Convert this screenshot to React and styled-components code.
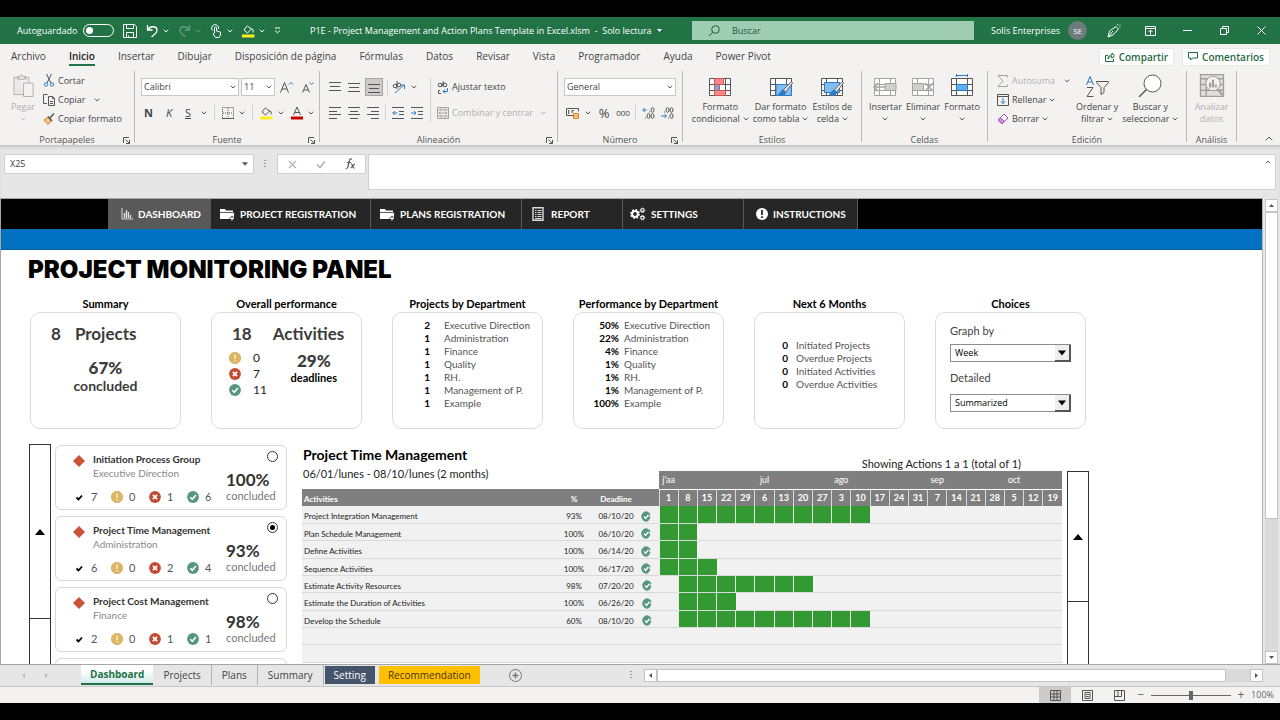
import React, { useState } from 'react';
import styled, { createGlobalStyle, css } from 'styled-components';

const GlobalStyle = createGlobalStyle`
  * {
    box-sizing: border-box;
  }

  body {
    margin: 0;
    background-color: #000;
  }

  button,
  input,
  select {
    font: inherit;
    color: inherit;
    margin: 0;
    padding: 0;
    border: 0;
    background: none;
    border-radius: 0;
  }

  button {
    cursor: pointer;
  }

  svg {
    display: block;
    flex: none;
  }
`;

const Window = styled.div`
  display: flex;
  flex-direction: column;
  height: 100vh;
  padding: 17px 0;
  background-color: #000;
  color: #444;
  font-family: 'Open Sans', 'Noto Sans', sans-serif;
  font-size: 9px;
  line-height: 12px;
`;

/* ---------- title bar ---------- */

const TitleBar = styled.header`
  display: grid;
  grid-template-columns: 310px 1fr 282px 306px;
  align-items: center;
  height: 27px;
  flex: none;
  background-color: #217346;
  color: #fff;
`;

const QuickAccess = styled.div`
  display: flex;
  align-items: center;
  padding-left: 17px;
`;

const AutoSave = styled.label`
  display: flex;
  align-items: center;
  gap: 6px;
  margin-right: 9px;
`;

const Toggle = styled.input.attrs({ type: 'checkbox' })`
  appearance: none;
  display: flex;
  align-items: center;
  width: 31px;
  height: 13px;
  border: 1px solid #fff;
  border-radius: 7px;
  padding-left: 2px;

  &::before {
    content: '';
    width: 7px;
    height: 7px;
    border-radius: 50%;
    background-color: #fff;
  }
`;

const QuickButton = styled.button`
  display: flex;
  align-items: center;
  gap: 4px;
  margin-right: 9px;
  opacity: ${(props) => (props.$faded ? 0.3 : 1)};
`;

const FileName = styled.div`
  display: flex;
  align-items: center;
  gap: 5px;
  white-space: pre;
`;

const SearchBox = styled.label`
  display: flex;
  align-items: center;
  gap: 12px;
  height: 19px;
  padding-left: 16px;
  background-color: #9fcdb3;
  color: #1e5c3b;

  input {
    flex: 1;
    outline: none;
  }

  input::placeholder {
    color: #1e5c3b;
  }
`;

const Account = styled.div`
  display: flex;
  align-items: center;
`;

const Avatar = styled.span`
  display: grid;
  place-items: center;
  width: 19px;
  height: 19px;
  border-radius: 50%;
  background-color: #6d7b7c;
  font-size: 8px;
`;

const UserName = styled.div`
  display: flex;
  align-items: center;
  gap: 8px;
  margin-right: auto;
  padding-left: 17px;
`;

const WindowButton = styled.button`
  display: grid;
  place-items: center;
  width: 37px;
  height: 27px;
`;

/* ---------- ribbon ---------- */

const TabRow = styled.nav`
  display: flex;
  align-items: center;
  justify-content: space-between;
  height: 25px;
  flex: none;
  padding: 0 10px 0 11px;
  background-color: #f3f2f1;
  font-size: 10px;
`;

const TabList = styled.div`
  display: flex;
  gap: 23px;
`;

const RibbonTab = styled.button`
  height: 19px;
  border-bottom: 2px solid transparent;
  white-space: nowrap;
  ${(props) =>
    props.$active &&
    css`
      border-color: #217346;
      color: #222;
      font-weight: 600;
    `}
`;

const TabActions = styled.div`
  display: flex;
  gap: 8px;
`;

const ShareButton = styled.button`
  display: flex;
  align-items: center;
  gap: 4px;
  height: 18px;
  padding: 0 5px;
  border: 1px solid #e8e7e6;
  border-radius: 2px;
  background-color: #fff;
  color: #1f6b41;
  font-weight: 600;
`;

const Ribbon = styled.section`
  display: flex;
  height: 76px;
  flex: none;
  background-color: #f3f2f1;
`;

const Group = styled.div`
  display: flex;
  flex-direction: column;
  flex: none;
  width: ${(props) => props.$width}px;
  margin: 2px 0 3px;
  border-right: 1px solid #bdbbb9;
`;

const GroupBody = styled.div`
  display: flex;
  flex: 1;
  gap: ${(props) => props.$gap || 0}px;
  padding-left: ${(props) => props.$left || 0}px;
  justify-content: ${(props) => (props.$center ? 'center' : 'flex-start')};
`;

const GroupLabel = styled.div`
  display: grid;
  grid-template-columns: ${(props) => (props.$plain ? '1fr' : '16px 1fr 16px')};
  align-items: center;
  height: 8px;
  text-align: center;
  color: #555;

  button {
    justify-self: center;
  }
`;

const ButtonColumn = styled.div`
  display: flex;
  flex-direction: column;
  justify-content: space-between;
  height: 55px;
  padding-top: 2px;
`;

const SmallButton = styled.button`
  display: flex;
  align-items: center;
  gap: 3px;
  height: 15px;
  white-space: nowrap;
  color: ${(props) => (props.disabled ? '#b1afad' : '#444')};
`;

const LargeButton = styled.button`
  display: flex;
  flex-direction: column;
  align-items: center;
  min-width: 30px;
  padding-top: 3px;
  white-space: nowrap;
  color: ${(props) => (props.disabled ? '#b1afad' : '#444')};

  svg:first-child {
    margin-bottom: 4px;
  }
`;

const ButtonLine = styled.span`
  display: flex;
  align-items: center;
  gap: 3px;
  height: 12px;

  svg:first-child {
    margin-bottom: 0;
  }
`;

const Stack = styled.div`
  display: flex;
  flex-direction: column;
  gap: 8px;
  padding-top: 7px;
`;

const ToolRow = styled.div`
  display: flex;
  align-items: center;
  gap: ${(props) => props.$gap}px;
  height: 18px;
`;

const ToolButton = styled.button`
  display: flex;
  align-items: center;
  justify-content: center;
  gap: 5px;
  min-width: ${(props) => props.$width || 12}px;
  height: 18px;
  color: ${(props) => (props.disabled ? '#b1afad' : '#444')};
  font-size: ${(props) => props.$size || 9}px;
  font-weight: ${(props) => (props.$bold ? 700 : 400)};
  font-style: ${(props) => (props.$italic ? 'italic' : 'normal')};
  text-decoration: ${(props) => (props.$underline ? 'underline' : 'none')};
  white-space: nowrap;
  ${(props) =>
    props.$pressed &&
    css`
      border: 1px solid #a6a4a2;
      background-color: #cdcbc9;
    `}
`;

const Separator = styled.span`
  width: 1px;
  height: ${(props) => props.$height || 16}px;
  background-color: #d4d2d0;
`;

const Picker = styled.span`
  position: relative;
  display: block;
  width: ${(props) => props.$width}px;

  svg {
    position: absolute;
    top: 50%;
    right: 3px;
    margin-top: -2px;
    pointer-events: none;
  }
`;

const PickerSelect = styled.select`
  appearance: none;
  display: block;
  width: 100%;
  height: 18px;
  padding-left: 2px;
  border: 1px solid #c8c6c4;
  background-color: #fff;
`;

const RibbonEnd = styled.div`
  display: flex;
  flex: 1;
  align-items: flex-end;
  justify-content: flex-end;
  padding: 0 7px 4px 0;
`;

/* ---------- formula bar ---------- */

const FormulaBar = styled.section`
  display: flex;
  align-items: flex-start;
  height: 53px;
  flex: none;
  padding: 9px 4px 0;
  background-color: #e6e6e6;
  box-shadow: inset 0 3px 3px -1px #c4c4c4;
`;

const NameBox = styled.label`
  display: flex;
  align-items: center;
  width: 250px;
  height: 20px;
  padding: 0 5px;
  border: 1px solid #d0d0d0;
  background-color: #fff;

  input {
    flex: 1;
    min-width: 0;
    outline: none;
  }
`;

const Dots = styled.span`
  width: 2px;
  height: 9px;
  margin: ${(props) => props.$margin};
  background-image: linear-gradient(#9a9a9a 1px, transparent 1px);
  background-size: 2px 3px;
`;

const FormulaButtons = styled.div`
  display: flex;
  align-items: center;
  justify-content: space-around;
  width: 89px;
  height: 20px;
  margin-right: 2px;
  border: 1px solid #d0d0d0;
  background-color: #fff;
`;

const FormulaInput = styled.div`
  display: flex;
  justify-content: flex-end;
  flex: 1;
  height: 36px;
  padding: 5px 4px 0;
  border: 1px solid #d0d0d0;
  background-color: #fff;

  input {
    flex: 1;
    height: 14px;
    outline: none;
  }
`;

/* ---------- sheet ---------- */

const SheetArea = styled.div`
  display: flex;
  flex: 1;
  min-height: 0;
`;

const Sheet = styled.main`
  flex: 1;
  min-width: 0;
  overflow: hidden;
  border-left: 1px solid #a6a6a6;
  border-top: 1px solid #a6a6a6;
  background-color: #fff;
  color: #222;
  font-family: Lato, 'Open Sans', sans-serif;
  font-size: 10px;
`;

const NavBar = styled.nav`
  display: flex;
  height: 30px;
  padding-left: 107px;
  background-color: #000;
`;

const NavItem = styled.a`
  display: flex;
  align-items: center;
  gap: ${(props) => props.$gap}px;
  width: ${(props) => props.$width}px;
  padding-left: ${(props) => props.$left}px;
  border-right: 1px solid #595959;
  background-color: ${(props) => (props.$active ? '#595959' : '#262626')};
  color: #fff;
  font-weight: 700;
  text-decoration: none;
  white-space: nowrap;
`;

const BlueBand = styled.div`
  height: 21px;
  background-color: #0070c0;
  border-bottom: 1px solid #0a5c9c;
`;

const Panel = styled.div`
  padding: 7px 0 0 27px;
`;

const PanelTitle = styled.h1`
  margin: 0;
  color: #000;
  font-family: Inter, 'Liberation Sans', sans-serif;
  font-size: 24px;
  font-weight: 900;
  line-height: 25px;
`;

const Cards = styled.div`
  display: grid;
  grid-template-columns: repeat(6, 151px);
  gap: 30px;
  margin-top: 14px;
  padding-left: 2px;
`;

const CardTitle = styled.h2`
  margin: 0;
  color: #000;
  font-size: 11px;
  font-weight: 700;
  line-height: 16px;
  text-align: center;
  white-space: nowrap;
`;

const CardBox = styled.div`
  height: 117px;
  border: 1px solid #dcdcdc;
  border-radius: 10px;
`;

const Headline = styled.div`
  display: flex;
  gap: ${(props) => props.$gap}px;
  padding: 11px 0 0 20px;
  color: #3b3b3b;
  font-size: 17px;
  font-weight: 700;
  line-height: 20px;
`;

const Centered = styled.div`
  padding-top: 15px;
  color: #3b3b3b;
  font-size: 14px;
  font-weight: 700;
  line-height: 17px;
  text-align: center;

  strong {
    display: block;
    font-size: 17px;
    line-height: 18px;
  }
`;

const Performance = styled.div`
  display: flex;
  justify-content: space-between;
  padding: 6px 24px 0 17px;
`;

const CountList = styled.div`
  display: flex;
  flex-direction: column;
  color: #222;
  font-size: 12px;
  line-height: 16px;

  span {
    display: flex;
    align-items: center;
    gap: 12px;
  }
`;

const Deadlines = styled.div`
  padding-top: 2px;
  color: #000;
  font-size: 11px;
  font-weight: 700;
  line-height: 15px;
  text-align: center;

  strong {
    display: block;
    color: #3b3b3b;
    font-size: 17px;
    line-height: 18px;
  }
`;

const FigureList = styled.dl`
  display: grid;
  grid-template-columns: ${(props) => props.$num}px 1fr;
  column-gap: ${(props) => props.$gap}px;
  margin: 0;
  padding-top: ${(props) => props.$top}px;
  line-height: 13px;
  white-space: nowrap;

  dt {
    color: #000;
    font-weight: 700;
    text-align: right;
  }

  dd {
    margin: 0;
    color: #555;
  }
`;

const FormSelect = styled.span`
  position: relative;
  display: block;
  width: 121px;
  margin-top: 5px;

  select {
    appearance: none;
    display: block;
    width: 100%;
    height: 18px;
    padding-left: 4px;
    border: 1px solid #8c8c8c;
    background-color: #fff;
    color: #000;
    font-family: 'Open Sans', sans-serif;
    font-size: 9px;
  }
`;

const ChoiceLabel = styled.label`
  display: block;
  padding: 10px 14px 0;
  color: #444;
  font-size: 11px;
  line-height: 16px;

  & + & {
    padding-top: 8px;
  }

  & + & ${FormSelect} {
    margin-top: 8px;
  }
`;

const DropArrow = styled.span`
  position: absolute;
  top: 1px;
  right: 0;
  display: grid;
  place-items: center;
  width: 16px;
  height: 17px;
  border-right: 2px solid #555;
  border-bottom: 2px solid #555;
  background-color: #eee;
  pointer-events: none;
`;

const Lower = styled.div`
  display: flex;
  align-items: flex-start;
  margin-top: 15px;
`;

const Spinner = styled.div`
  display: flex;
  flex-direction: column;
  flex: none;
  width: 22px;
  margin: ${(props) => props.$margin};
  border: 1px solid #333;

  button {
    display: grid;
    place-items: center;
    height: ${(props) => props.$height}px;
  }

  button + button {
    height: 200px;
    border-top: 1px solid #333;
  }
`;

const ProjectList = styled.div`
  display: flex;
  flex-direction: column;
  gap: 6px;
  flex: none;
  width: 232px;
  padding-top: 1px;
`;

const ProjectCard = styled.label`
  display: flex;
  justify-content: space-between;
  height: 65px;
  border: 1px solid #d9d9d9;
  border-radius: 6px;
`;

const ProjectInfo = styled.div`
  display: flex;
  flex-direction: column;
  justify-content: space-between;
  padding: 6px 0 6px 17px;
`;

const ProjectHead = styled.div`
  display: flex;
  gap: 8px;
  color: #888;
  line-height: 14px;

  svg {
    margin-top: 3px;
  }

  strong {
    display: block;
    color: #333;
  }
`;

const Stats = styled.div`
  display: grid;
  grid-template-columns: repeat(4, 38px);
  color: #555;
  font-size: 11px;
`;

const Stat = styled.span`
  display: flex;
  align-items: center;
  gap: 6px;
`;

const ProjectResult = styled.div`
  display: flex;
  flex-direction: column;
  width: 60px;
  padding-top: 5px;
  color: #777;
  font-size: 11px;
  line-height: 13px;

  strong {
    margin-top: 9px;
    color: #333;
    font-size: 17px;
    line-height: 18px;
  }
`;

const Radio = styled.input.attrs({ type: 'radio' })`
  appearance: none;
  display: grid;
  place-items: center;
  align-self: flex-end;
  width: 11px;
  height: 11px;
  margin-right: 8px;
  border: 1px solid #333;
  border-radius: 50%;

  &:checked::before {
    content: '';
    width: 5px;
    height: 5px;
    border-radius: 50%;
    background-color: #000;
  }
`;

const Schedule = styled.div`
  flex: none;
  width: 760px;
  margin-left: 15px;
`;

const ScheduleHead = styled.div`
  display: flex;
  align-items: flex-start;
  justify-content: space-between;
  height: 27px;
  padding: 3px 41px 0 1px;
  color: #222;
  font-size: 11px;

  h2 {
    margin: 0;
    color: #000;
    font-size: 14px;
    line-height: 16px;
  }

  span {
    padding-top: 9px;
    line-height: 15px;
  }
`;

const Gantt = styled.table`
  width: 100%;
  table-layout: fixed;
  border-collapse: collapse;
  font-size: 8px;
  line-height: 10px;
  white-space: nowrap;
`;

const Period = styled.td`
  padding: 0 0 0 1px;
  color: #222;
  font-size: 11px;
  line-height: 6px;
  vertical-align: top;
`;

const MonthCell = styled.th`
  height: 18px;
  padding: 0;
  background-color: #7f7f7f;
  border-bottom: 1px solid #fff;
  color: #fff;
  font-size: 9px;
  font-weight: 400;
`;

const HeadCell = styled.th`
  height: 17px;
  padding: ${(props) => (props.$first ? '2px 0 0 2px' : '2px 0 0')};
  background-color: #7f7f7f;
  color: #fff;
  text-align: ${(props) => (props.$first ? 'left' : 'center')};
`;

const WeekCell = styled.th`
  padding: 0;
  background-color: #7f7f7f;
  border-left: 1px solid #d9d9d9;
  color: #fff;
  font-size: 9px;
`;

const ActivityRow = styled.tr`
  height: 17px;
  background-color: #f1f1f1;
  border-bottom: 1px solid #d9d9d9;

  &:nth-child(3n) {
    height: 18px;
  }
`;

const Cell = styled.td`
  padding: ${(props) => (props.$first ? '4px 0 0 2px' : '4px 0 0')};
  text-align: ${(props) => (props.$first ? 'left' : 'center')};

  svg {
    margin: 0 auto;
  }
`;

const WeekSlot = styled.td`
  padding: 0;
  ${(props) =>
    props.$filled &&
    css`
      background-color: #339933;
      border-left: 1px solid #e3f0e3;
    `}
`;

/* ---------- scrollbars, sheet tabs, status bar ---------- */

const VerticalScroll = styled.div`
  display: flex;
  flex-direction: column;
  width: 18px;
  flex: none;
  padding: 1px 2px 0 2px;
  border-left: 1px solid #b5b5b5;
  background-color: #e6e6e6;
`;

const ScrollButton = styled.button`
  display: grid;
  place-items: center;
  width: 13px;
  height: 13px;
  flex: none;
  border: 1px solid #c4c4c4;
  background-color: #fff;
`;

const ScrollTrack = styled.div`
  display: flex;
  flex-direction: ${(props) => (props.$horizontal ? 'row' : 'column')};
  flex: 1;
  background-color: #dadada;
`;

const ScrollThumb = styled.div`
  flex: 0 0 ${(props) => props.$part}%;
  border: 1px solid #c4c4c4;
  background-color: #fff;
`;

const SheetTabs = styled.footer`
  display: flex;
  height: 23px;
  flex: none;
  padding-right: 17px;
  border-top: 1px solid #a6a6a6;
  border-bottom: 1px solid #c6c6c6;
  background-color: #e6e6e6;
  font-size: 10px;
`;

const TabArrows = styled.div`
  display: flex;
  align-items: center;
  gap: 18px;
  width: 81px;
  padding-left: 21px;
`;

const SheetTab = styled.button`
  height: 20px;
  padding: 0 10px;
  border-right: 1px solid #b0b0b0;
  ${(props) =>
    props.$active &&
    css`
      padding: 0 9px;
      border-right: 0;
      border-bottom: 2px solid #217346;
      background-image: linear-gradient(#fff 30%, #d3ebec);
      color: #217346;
      font-weight: 700;
    `}
  ${(props) =>
    props.$color &&
    css`
      height: 18px;
      margin: 1px 3px 0 1px;
      padding: 0 9px;
      border: 0;
      background-color: ${props.$color};
      color: ${props.$text};
    `}
`;

const AddSheet = styled.button`
  margin-left: 26px;
`;

const HorizontalScroll = styled.div`
  display: flex;
  align-items: center;
  align-self: center;
  width: 619px;
  height: 13px;

  ${ScrollTrack} {
    height: 13px;
  }
`;

const StatusBar = styled.div`
  display: flex;
  align-items: center;
  justify-content: flex-end;
  height: 16px;
  flex: none;
  padding-right: 6px;
  background-color: #f3f2f1;
  color: #666;
`;

const ViewButton = styled.button`
  display: grid;
  place-items: center;
  width: 32px;
  height: 16px;
  background-color: ${(props) => (props.$active ? '#cdcbc9' : 'transparent')};
`;

const ZoomSlider = styled.input.attrs({ type: 'range' })`
  appearance: none;
  width: 80px;
  height: 10px;
  margin: 0 4px;
  background: linear-gradient(#666, #666) center / 100% 1px no-repeat;

  &::-webkit-slider-thumb {
    appearance: none;
    width: 4px;
    height: 9px;
    background-color: #666;
  }
`;

const ZoomStep = styled.button`
  width: 12px;
  font-size: 12px;
`;

const ZoomValue = styled.span`
  width: 27px;
  text-align: right;
`;

/* ---------- icons ---------- */

const Svg = ({ w = 12, h = w, box, children, ...rest }) => (
  <svg width={w} height={h} viewBox={box || `0 0 ${w} ${h}`} fill="none" stroke="#555" aria-hidden="true" {...rest}>
    {children}
  </svg>
);

const Chevron = ({ color = '#555' }) => (
  <Svg w={6} h={4} stroke={color}>
    <path d="M.8.7 3 3 5.200.7" />
  </Svg>
);

const Triangle = ({ dir = 'down', size = 5, color = '#555' }) => {
  const paths = { down: 'M0 2h10L5 8z', up: 'M0 8h10L5 2z', left: 'M8 0v10L2 5z', right: 'M2 0v10l6-5z' };
  return (
    <Svg w={size} box="0 0 10 10" fill={color} stroke="none">
      <path d={paths[dir]} />
    </Svg>
  );
};

const Launcher = () => (
  <button aria-label="Más opciones">
    <Svg w={7}>
      <path d="M.5 6V.5H6M2.500 2.500l4 4M6.500 3v3.500H3" />
    </Svg>
  </button>
);

const Warn = ({ w = 12 }) => (
  <Svg w={w} box="0 0 12 12" stroke="none">
    <circle cx="6" cy="6" r="5.700" fill="#dcb765" stroke="#c79f4c" strokeWidth=".6" />
    <path d="M6 2.500v4.500M6 8.200v1.200" stroke="#fff3d2" strokeWidth="1.300" />
  </Svg>
);

const Cross = ({ w = 12 }) => (
  <Svg w={w} box="0 0 12 12" stroke="none">
    <circle cx="6" cy="6" r="5.900" fill="#c24a33" />
    <path d="M3.900 3.900l4.200 4.200M8.100 3.900L3.900 8.100" stroke="#fff" strokeWidth="1.800" />
  </Svg>
);

const Tick = ({ w = 12 }) => (
  <Svg w={w} box="0 0 12 12" stroke="none">
    <circle cx="6" cy="6" r="5.900" fill="#56957f" />
    <path d="M3.300 6.200l2 2L8.900 4" stroke="#fff" strokeWidth="1.600" />
  </Svg>
);

const RowTick = () => (
  <Svg w={10} h={11} box="0 0 10 11" stroke="none">
    <path d="M7.500 1.200A4.700 5 0 1 0 7.500 9.800L9.500 6.500 8 5.500 9.500 3z" fill="#56957f" />
    <path d="M3 5.500l1.700 2L7.500 3.600" stroke="#fff" strokeWidth="1.300" />
  </Svg>
);

const Check = () => (
  <Svg w={12} stroke="#000" strokeWidth="1.800">
    <path d="M3.500 6.500l2 2 3.500-4" />
  </Svg>
);

const Diamond = () => (
  <Svg w={12} stroke="none">
    <path d="M6 0l6 6-6 6-6-6z" fill="#cb5338" />
  </Svg>
);

const Bucket = ({ color = '#555' }) => (
  <Svg w={13} h={14} stroke={color}>
    <path d="M5.500 1.500L2 6l3.500 3L9.500 5 6 2.500M9.500 4.500c1.500.5 2 2 1.500 4" />
    <path d="M0 12h12.500" stroke="#ffee22" strokeWidth="3" />
  </Svg>
);

const Lines = ({ rows }) => (
  <Svg w={12}>
    {rows.map(([x, y, width]) => (
      <path key={y} d={`M${x} ${y}.5h${width}`} />
    ))}
  </Svg>
);

const Grid = ({ color = '#555', children, top }) => (
  <Svg w={24} h={23} stroke={color}>
    {top}
    <path d="M1.500 4.500h21v17h-21zM1.500 10.500h21M1.500 16.500h21M6.500 4.500v17M17.500 4.500v17" fill="#fff" />
    {children}
  </Svg>
);

const Brush = () => (
  <>
    <path d="M22.500 7.500L14.500 16l2 2L23.500 9z" fill="#fff" stroke="#555" />
    <path d="M14 16c-2 0-2 3-5 4.500 3 2 7 1.500 7.500-2z" fill="#2b7cc4" stroke="#2b7cc4" />
  </>
);

const Folder = () => (
  <Svg w={15} h={13} stroke="none">
    <path d="M0 1h5l1 1.500h7V4H0zM0 4.800h14V11H0z" fill="#fff" />
    <path d="M12 8v5M9.500 10.500h5" stroke="#262626" strokeWidth="2.200" />
    <path d="M12 8.500v4M10 10.500h4" stroke="#fff" strokeWidth="1.200" />
  </Svg>
);

const Gear = ({ x, y, r }) => (
  <g transform={`translate(${x} ${y})`}>
    <circle r={r} stroke="#fff" strokeWidth={r * 0.7} />
    <circle r={r * 1.45} stroke="#fff" strokeWidth={r * 0.5} strokeDasharray={`${r * 0.57} ${r * 0.57}`} />
  </g>
);

const navIcons = {
  chart: (
    <Svg w={12} stroke="#ddd">
      <path d="M1 0v11h11" strokeWidth="1" />
      <path d="M3.500 10V5M5.500 10V2M7.500 10V4M9.500 10V7" strokeWidth="1.400" />
    </Svg>
  ),
  folder: <Folder />,
  report: (
    <Svg w={12} h={14} stroke="#ddd">
      <path d="M1 .8h10v12.400H1z" strokeWidth="1.400" />
      <path d="M3 3.500h1.500M3 5.500h1.500M3 7.500h1.500M3 9.500h1.500M5.500 3.500h4M5.500 5.500h4M5.500 7.500h4M5.500 9.500h4M3 11.500h6.500" />
    </Svg>
  ),
  gears: (
    <Svg w={16} h={14}>
      <Gear x={5} y={7} r={2.9} />
      <Gear x={12.5} y={3.3} r={1.6} />
      <Gear x={12.5} y={10.7} r={1.6} />
    </Svg>
  ),
  info: (
    <Svg w={12} stroke="none">
      <circle cx="6" cy="6" r="6" fill="#fff" />
      <path d="M6 2v5M6 8.300v1.700" stroke="#262626" strokeWidth="1.800" />
    </Svg>
  ),
};

/* ---------- data ---------- */

const ribbonTabs = ['Archivo', 'Inicio', 'Insertar', 'Dibujar', 'Disposición de página', 'Fórmulas', 'Datos', 'Revisar', 'Vista', 'Programador', 'Ayuda', 'Power Pivot'];

const navItems = [
  { text: 'DASHBOARD', icon: 'chart', width: 103, left: 13, gap: 5, active: true },
  { text: 'PROJECT REGISTRATION', icon: 'folder', width: 160, left: 9, gap: 5 },
  { text: 'PLANS REGISTRATION', icon: 'folder', width: 151, left: 9, gap: 5 },
  { text: 'REPORT', icon: 'report', width: 101, left: 10, gap: 7 },
  { text: 'SETTINGS', icon: 'gears', width: 121, left: 7, gap: 5 },
  { text: 'INSTRUCTIONS', icon: 'info', width: 114, left: 12, gap: 5 },
];

const departments = [
  ['Executive Direction', '2', '50%'],
  ['Administration', '1', '22%'],
  ['Finance', '1', '4%'],
  ['Quality', '1', '1%'],
  ['RH.', '1', '1%'],
  ['Management of P.', '1', '1%'],
  ['Example', '1', '100%'],
];

const nextMonths = ['Initiated Projects', 'Overdue Projects', 'Initiated Activities', 'Overdue Activities'];

const projects = [
  { name: 'Initiation Process Group', area: 'Executive Direction', stats: [7, 0, 1, 6], done: '100%' },
  { name: 'Project Time Management', area: 'Administration', stats: [6, 0, 2, 4], done: '93%' },
  { name: 'Project Cost Management', area: 'Finance', stats: [2, 0, 1, 1], done: '98%' },
];

const weeks = [1, 8, 15, 22, 29, 6, 13, 20, 27, 3, 10, 17, 24, 31, 7, 14, 21, 28, 5, 12, 19];
const months = { 0: "j'aa", 5: 'jul', 9: 'ago', 14: 'sep', 18: 'oct' };

const activities = [
  { name: 'Project Integration Management', pct: '93%', date: '08/10/20', from: 0, to: 10 },
  { name: 'Plan Schedule Management', pct: '100%', date: '06/10/20', from: 0, to: 1 },
  { name: 'Define Activities', pct: '100%', date: '06/14/20', from: 0, to: 1 },
  { name: 'Sequence Activities', pct: '100%', date: '06/17/20', from: 0, to: 2 },
  { name: 'Estimate Activity Resources', pct: '98%', date: '07/20/20', from: 1, to: 7 },
  { name: 'Estimate the Duration of Activities', pct: '100%', date: '06/26/20', from: 1, to: 3 },
  { name: 'Develop the Schedule', pct: '60%', date: '08/10/20', from: 1, to: 10 },
  {},
  {},
];

const statIcons = [Check, Warn, Cross, Tick];

/* ---------- sections ---------- */

const Header = () => (
  <TitleBar>
    <QuickAccess>
      <AutoSave>
        Autoguardado
        <Toggle />
      </AutoSave>
      <QuickButton aria-label="Guardar">
        <Svg w={14} stroke="#fff">
          <path d="M.5.5h11l2 2v11H.5zM3.500.5v4h7v-4M3.500 13.500V8.500h7v5M5.500 13.500v-2" />
        </Svg>
      </QuickButton>
      <QuickButton aria-label="Deshacer">
        <Svg w={13} h={14} stroke="#fff" strokeWidth="1.300">
          <path d="M1.500 1v5h5M1.500 6C4 2 10 1.500 11 5.500c.7 3-2.500 5-5.500 7.500" />
        </Svg>
        <Chevron color="#fff" />
      </QuickButton>
      <QuickButton aria-label="Rehacer" $faded>
        <Svg w={13} h={14} stroke="#fff" strokeWidth="1.300">
          <path d="M11.500 1v5h-5M11.500 6C9 2 3 1.500 2 5.500c-.7 3 2.500 5 5.500 7.500" />
        </Svg>
        <Chevron color="#fff" />
      </QuickButton>
      <QuickButton aria-label="Modo táctil">
        <Svg w={13} h={14} stroke="#fff">
          <path d="M2.500 6.500A3.500 3.500 0 1 1 8.500 5M4.500 9V3.500q1-1 2 0V7l4 1v3l-1.500 2.500H5.500L3 10z" />
        </Svg>
        <Chevron color="#fff" />
      </QuickButton>
      <QuickButton aria-label="Color de relleno">
        <Bucket color="#fff" />
        <Chevron color="#fff" />
      </QuickButton>
      <QuickButton aria-label="Personalizar barra">
        <Svg w={7} h={7} stroke="#fff">
          <path d="M1 1h5M1 3.500l2.500 2.300L6 3.500" />
        </Svg>
      </QuickButton>
    </QuickAccess>
    <FileName>
      {'P1E - Project Management and Action Plans Template in Excel.xlsm  -  Solo lectura'}
      <Triangle color="#fff" />
    </FileName>
    <SearchBox>
      <Svg w={12} stroke="#1e5c3b">
        <circle cx="7.500" cy="4.500" r="3.800" />
        <path d="M4.700 7.300L.8 11.200" />
      </Svg>
      <input type="search" placeholder="Buscar" aria-label="Buscar" />
    </SearchBox>
    <Account>
      <UserName>
        Solís Enterprises
        <Avatar>SE</Avatar>
      </UserName>
      <WindowButton aria-label="Próximamente">
        <Svg w={14} stroke="#fff">
          <path d="M1 13l1.500-6L9 2.500 11.500 5 6 11zM2 12l4-5M10 1l1-.5M12.500 3.500l1-.5M12 1.500l1-1" />
        </Svg>
      </WindowButton>
      <WindowButton aria-label="Opciones de la cinta">
        <Svg w={11} h={10} stroke="#fff">
          <path d="M.5.5h10v9H.5zM.5 2.500h10M5.500 8.500V4.500M3.500 6l2-2 2 2" />
        </Svg>
      </WindowButton>
      <WindowButton aria-label="Minimizar">
        <Svg w={9} stroke="#fff">
          <path d="M0 4.500h9" />
        </Svg>
      </WindowButton>
      <WindowButton aria-label="Restaurar">
        <Svg w={9} stroke="#fff">
          <path d="M.5 2.500h6v6h-6zM2.500 2.500v-2h6v6h-2" />
        </Svg>
      </WindowButton>
      <WindowButton aria-label="Cerrar">
        <Svg w={9} stroke="#fff">
          <path d="M.5.5l8 8M8.500.5l-8 8" />
        </Svg>
      </WindowButton>
    </Account>
  </TitleBar>
);

const Large = ({ icon, lines, arrow, pale, ...rest }) => (
  <LargeButton {...rest}>
    {icon}
    {lines.map((line, i) => (
      <ButtonLine key={i}>
        {line}
        {arrow && i === lines.length - 1 && <Chevron color={pale ? '#bbb' : '#555'} />}
      </ButtonLine>
    ))}
  </LargeButton>
);

const RibbonBar = () => (
  <Ribbon>
    <Group $width={135}>
      <GroupBody $left={8} $gap={5}>
        <Large
          disabled
          arrow
          pale
          lines={['Pegar', '']}
          icon={
            <Svg w={22} h={23} box="0 0 22 24" stroke="#b1afad">
              <path d="M8 3.500H1.500v18h10M12 3.500h5v5M5.500 5.500v-3H8L9.500.5 11 2.500h2.500v3z" fill="#e9e8e7" />
              <path d="M11.500 9.500h10v14h-10z" fill="#f3f2f1" />
            </Svg>
          }
        />
        <ButtonColumn>
          <SmallButton>
            <Svg w={12} h={13}>
              <path d="M3.500 0L8 9M8.500 0L4 9" />
              <circle cx="3" cy="10.500" r="1.700" stroke="#2b7cc4" />
              <circle cx="9" cy="10.500" r="1.700" stroke="#2b7cc4" />
            </Svg>
            Cortar
          </SmallButton>
          <SmallButton>
            <Svg w={12} h={13}>
              <path d="M4 10.500H.5V1.500h4M5.500 3.500h4l2 2v7h-6zM9.500 3.500v2h2M7 8.500h3M7 10.500h3" />
            </Svg>
            Copiar
            <Svg w={16} h={4}>
              <path d="M6 .7l2.200 2.300L10.400.7" />
            </Svg>
          </SmallButton>
          <SmallButton>
            <Svg w={12}>
              <path d="M1 7l4-3 3.500 4L5 11.500z" fill="#f6c28b" stroke="#d9822b" />
              <path d="M5 3.500L9 8M7 5l4-4.500" strokeWidth="1.500" />
            </Svg>
            Copiar formato
          </SmallButton>
        </ButtonColumn>
      </GroupBody>
      <GroupLabel>
        <span />
        Portapapeles
        <Launcher />
      </GroupLabel>
    </Group>

    <Group $width={185}>
      <GroupBody $left={6}>
        <Stack>
          <ToolRow $gap={2}>
            <Picker $width={98}>
              <PickerSelect aria-label="Fuente">
                <option>Calibri</option>
              </PickerSelect>
              <Chevron />
            </Picker>
            <Picker $width={34}>
              <PickerSelect aria-label="Tamaño de fuente">
                <option>11</option>
              </PickerSelect>
              <Chevron />
            </Picker>
            <ToolButton $width={20} aria-label="Aumentar tamaño">
              <Svg w={14} h={12}>
                <path d="M.5 11.500L4.500 1.500l4 10M2 8h5" />
                <path d="M9 3.500L11 1.500l2 2" stroke="#2b7cc4" />
              </Svg>
            </ToolButton>
            <ToolButton $width={18} aria-label="Reducir tamaño">
              <Svg w={12} h={12}>
                <path d="M.5 11.500L4 3.500l3.500 8M2 9h4" />
                <path d="M7.500 1.500l2 2 2-2" stroke="#2b7cc4" />
              </Svg>
            </ToolButton>
          </ToolRow>
          <ToolRow $gap={7}>
            <ToolButton $width={15} $size={11} $bold>N</ToolButton>
            <ToolButton $size={11} $italic>K</ToolButton>
            <ToolButton $size={11} $underline>S</ToolButton>
            <Chevron />
            <Separator />
            <ToolButton aria-label="Bordes">
              <Svg w={12}>
                <path d="M.5.5h11v11M.5 11V.5M6 1v10M1 6h10" strokeDasharray="1 1" />
                <path d="M0 11.500h12" />
              </Svg>
              <Chevron />
            </ToolButton>
            <Separator />
            <ToolButton aria-label="Color de relleno">
              <Bucket />
              <Chevron />
            </ToolButton>
            <ToolButton aria-label="Color de fuente">
              <Svg w={12} h={14}>
                <path d="M2.500 9L6 1l3.500 8M3.700 6.500h4.600" />
                <path d="M0 12h12" stroke="#d00000" strokeWidth="3" />
              </Svg>
              <Chevron />
            </ToolButton>
          </ToolRow>
        </Stack>
      </GroupBody>
      <GroupLabel>
        <span />
        Fuente
        <Launcher />
      </GroupLabel>
    </Group>

    <Group $width={238}>
      <GroupBody $left={8} $gap={6}>
        <Stack>
          <ToolRow $gap={4}>
            <ToolButton $width={14} aria-label="Alinear arriba">
              <Lines rows={[[0, 1, 12], [1, 5, 10], [0, 9, 12]]} />
            </ToolButton>
            <ToolButton $width={15} aria-label="Alinear al medio">
              <Lines rows={[[0, 2, 12], [1, 6, 10], [0, 10, 12]]} />
            </ToolButton>
            <ToolButton $width={18} $pressed aria-label="Alinear abajo">
              <Lines rows={[[0, 3, 12], [1, 7, 10], [0, 11, 12]]} />
            </ToolButton>
            <Separator />
            <ToolButton aria-label="Orientación">
              <Svg w={14} h={13}>
                <circle cx="3" cy="5" r="1.800" />
                <circle cx="7" cy="4" r="1.800" />
                <path d="M5 3v5M5 0v4" />
                <path d="M3 12L12 4M8.500 4H12.500V8" stroke="#2b7cc4" />
              </Svg>
              <Chevron />
            </ToolButton>
          </ToolRow>
          <ToolRow $gap={5}>
            <ToolButton $width={14} aria-label="Alinear a la izquierda">
              <Lines rows={[[0, 0, 12], [0, 4, 8], [0, 7, 12], [0, 11, 8]]} />
            </ToolButton>
            <ToolButton $width={14} aria-label="Centrar">
              <Lines rows={[[0, 0, 12], [2, 4, 8], [0, 7, 12], [2, 11, 8]]} />
            </ToolButton>
            <ToolButton $width={14} aria-label="Alinear a la derecha">
              <Lines rows={[[0, 0, 12], [4, 4, 8], [0, 7, 12], [4, 11, 8]]} />
            </ToolButton>
            <Separator />
            <ToolButton $width={14} aria-label="Disminuir sangría">
              <Svg w={12}>
                <path d="M0 .5h12M7 4.500h5M7 7.500h5M0 11.500h12" />
                <path d="M5.500 6H.8M2.800 4l-2 2 2 2" stroke="#2b7cc4" />
              </Svg>
            </ToolButton>
            <ToolButton $width={14} aria-label="Aumentar sangría">
              <Svg w={12}>
                <path d="M0 .5h12M7 4.500h5M7 7.500h5M0 11.500h12" />
                <path d="M0 6h5M3 4l2 2-2 2" stroke="#2b7cc4" />
              </Svg>
            </ToolButton>
          </ToolRow>
        </Stack>
        <Stack>
          <Separator $height={44} />
        </Stack>
        <Stack>
          <ToolRow>
            <SmallButton>
              <Svg w={12} h={13}>
                <circle cx="3" cy="4" r="1.800" />
                <circle cx="8" cy="4" r="1.800" />
                <path d="M5 2v4M6.200 0v5M3 9.500H1.500v3H4" />
                <path d="M10.500 7v3.500H6M8 8.500L6 10.500l2 2" stroke="#2b7cc4" />
              </Svg>
              Ajustar texto
            </SmallButton>
          </ToolRow>
          <ToolRow>
            <SmallButton disabled>
              <Svg w={12} stroke="#a5a3a1">
                <path d="M.5.5h11v11H.5zM.5 3h11M.5 9h11M4 .5V3M8 .5V3M4 9v2.500M8 9v2.500M2 6h8M3.500 4.500L2 6l1.500 1.500M8.500 4.500L10 6 8.500 7.500" />
              </Svg>
              Combinar y centrar
              <Svg w={14} h={4} stroke="#b1afad">
                <path d="M5 .7l2.200 2.300L9.400.7" />
              </Svg>
            </SmallButton>
          </ToolRow>
        </Stack>
      </GroupBody>
      <GroupLabel>
        <span />
        Alineación
        <Launcher />
      </GroupLabel>
    </Group>

    <Group $width={125}>
      <GroupBody $left={6}>
        <Stack>
          <Picker $width={112}>
            <PickerSelect aria-label="Formato de número">
              <option>General</option>
            </PickerSelect>
            <Chevron />
          </Picker>
          <ToolRow $gap={5}>
            <ToolButton $width={28} aria-label="Formato de contabilidad">
              <Svg w={14} h={12}>
                <path d="M7 8.500H.5v-7h12v3M3.500 3.500h-1v3h1M6 6V3.500h2" />
                <path d="M7.500 6.500h5v5h-5zM7.500 9h5" fill="#fbd9a5" stroke="#d9822b" />
              </Svg>
              <Chevron />
            </ToolButton>
            <ToolButton $width={14} $size={13}>%</ToolButton>
            <ToolButton $width={14} $size={8}>000</ToolButton>
            <Separator />
            <ToolButton $width={14} aria-label="Aumentar decimales">
              <Svg w={13} h={12}>
                <path d="M5 3H.8M2.800 1l-2 2 2 2" stroke="#2b7cc4" />
                <ellipse cx="10.500" cy="3" rx="1.500" ry="2.300" />
                <ellipse cx="6.500" cy="9" rx="1.500" ry="2.300" />
                <ellipse cx="10.500" cy="9" rx="1.500" ry="2.300" />
                <path d="M7 5h1M3 11h1" />
              </Svg>
            </ToolButton>
            <ToolButton $width={14} aria-label="Disminuir decimales">
              <Svg w={13} h={12}>
                <ellipse cx="6.500" cy="3" rx="1.500" ry="2.300" />
                <ellipse cx="10.500" cy="3" rx="1.500" ry="2.300" />
                <ellipse cx="10.500" cy="9" rx="1.500" ry="2.300" />
                <path d="M0 9h5.500M3.500 7l2 2-2 2" stroke="#2b7cc4" />
                <path d="M3 5h1M7 11h1" />
              </Svg>
            </ToolButton>
          </ToolRow>
        </Stack>
      </GroupBody>
      <GroupLabel>
        <span />
        Número
        <Launcher />
      </GroupLabel>
    </Group>

    <Group $width={179}>
      <GroupBody $center $gap={4}>
        <Large
          arrow
          lines={['Formato', 'condicional']}
          icon={
            <Grid>
              <path d="M6.500 4.500h9v6h-9zM6.500 16.500h11v5h-11z" fill="#f58a8a" stroke="#d65353" />
              <path d="M6.500 10.500h5v6h-5z" fill="#7aa7dd" stroke="#d65353" />
            </Grid>
          }
        />
        <Large
          arrow
          lines={['Dar formato', 'como tabla']}
          icon={
            <Grid>
              <path d="M7 10.500h15.500v11H7z" fill="#83bdf0" stroke="#2b7cc4" />
              <Brush />
            </Grid>
          }
        />
        <Large
          arrow
          lines={['Estilos de', 'celda']}
          icon={
            <Grid>
              <path d="M4.500 8.500h15v10h-15z" fill="#83bdf0" stroke="#2b7cc4" />
              <Brush />
            </Grid>
          }
        />
      </GroupBody>
      <GroupLabel $plain>Estilos</GroupLabel>
    </Group>

    <Group $width={126}>
      <GroupBody $center $gap={4}>
        <Large
          arrow
          lines={['Insertar', '']}
          icon={
            <Grid color="#a5a3a1">
              <path d="M12 9.500h11v7H12z" fill="#d0cecc" />
              <path d="M12 13H1M5 9l-4 4 4 4" strokeWidth="1.500" />
            </Grid>
          }
        />
        <Large
          arrow
          lines={['Eliminar', '']}
          icon={
            <Grid color="#a5a3a1">
              <path d="M1.500 9.500h11v7h-11z" fill="#d0cecc" />
              <path d="M14 9l8 8M22 9l-8 8" strokeWidth="1.500" />
            </Grid>
          }
        />
        <Large
          arrow
          lines={['Formato', '']}
          icon={
            <Grid top={<path d="M6 1.500h12M6.500 0v3M17.500 0v3" stroke="#2b7cc4" />}>
              <path d="M6.500 10.500h11v6h-11z" fill="#62aef0" stroke="#2b7cc4" />
            </Grid>
          }
        />
      </GroupBody>
      <GroupLabel $plain>Celdas</GroupLabel>
    </Group>

    <Group $width={199}>
      <GroupBody $left={9} $gap={4}>
        <ButtonColumn>
          <SmallButton disabled>
            <Svg w={12} stroke="#a5a3a1">
              <path d="M10.500 2.500v-2H1L6 6 1 11.500h9.500v-2" />
            </Svg>
            Autosuma
            <Svg w={14} h={4}>
              <path d="M7 .7L9.200 3 11.400.7" />
            </Svg>
          </SmallButton>
          <SmallButton>
            <Svg w={12}>
              <path d="M.5.5h11v11H.5zM.5 2.500h11" />
              <path d="M6 4v5.500M3.800 7.300L6 9.500l2.200-2.200" stroke="#2b7cc4" />
            </Svg>
            Rellenar
            <Chevron />
          </SmallButton>
          <SmallButton>
            <Svg w={12} stroke="#a24fb8">
              <path d="M7 1l4 4-6 6-4-4z" fill="#fff" />
              <path d="M3.500 4.500l4 4L5 11 1 7z" fill="#cf8fe0" />
            </Svg>
            Borrar
            <Chevron />
          </SmallButton>
        </ButtonColumn>
        <Large
          arrow
          lines={['Ordenar y', 'filtrar']}
          icon={
            <Svg w={24} h={23}>
              <path d="M1.500 11L5 2.500 8.500 11M2.800 8h4.400" stroke="#2b7cc4" />
              <path d="M2 13.500h6L2 22.500h6.500" />
              <path d="M11.500 7.500h12v1l-4.500 5v5l-3 2v-7l-4.500-5z" />
            </Svg>
          }
        />
        <Large
          arrow
          lines={['Buscar y', 'seleccionar']}
          icon={
            <Svg w={24} h={23}>
              <circle cx="14.500" cy="9.500" r="8.500" fill="#fff" />
              <path d="M8.500 15.500L1 23" strokeWidth="1.400" />
            </Svg>
          }
        />
      </GroupBody>
      <GroupLabel $plain>Edición</GroupLabel>
    </Group>

    <Group $width={50}>
      <GroupBody $center>
        <Large
          disabled
          lines={['Analizar', 'datos']}
          icon={
            <Svg w={26} h={23} box="0 0 26 24" stroke="#a09e9c">
              <path d="M1 .5h24v23H1zM1 5h24M1 11h24M1 17h24M7 5v18" fill="#e1dfdd" strokeWidth="1.400" />
              <circle cx="14" cy="10" r="7.500" fill="#f3f2f1" />
              <path d="M11 14V9M14 14V6M17 14v-3" strokeWidth="2.200" />
              <path d="M19 16l5 6" strokeWidth="2" />
            </Svg>
          }
        />
      </GroupBody>
      <GroupLabel $plain>Análisis</GroupLabel>
    </Group>
    <RibbonEnd>
      <button aria-label="Contraer la cinta">
        <Svg w={8} h={5}>
          <path d="M.7 4.300L4 1l3.300 3.300" />
        </Svg>
      </button>
    </RibbonEnd>
  </Ribbon>
);

const SummaryCards = () => (
  <Cards>
    <div>
      <CardTitle>Summary</CardTitle>
      <CardBox>
        <Headline $gap={14}>
          <span>8</span>
          <span>Projects</span>
        </Headline>
        <Centered>
          <strong>67%</strong>
          concluded
        </Centered>
      </CardBox>
    </div>
    <div>
      <CardTitle>Overall performance</CardTitle>
      <CardBox>
        <Headline $gap={21}>
          <span>18</span>
          <span>Activities</span>
        </Headline>
        <Performance>
          <CountList>
            <span><Warn />0</span>
            <span><Cross />7</span>
            <span><Tick />11</span>
          </CountList>
          <Deadlines>
            <strong>29%</strong>
            deadlines
          </Deadlines>
        </Performance>
      </CardBox>
    </div>
    <div>
      <CardTitle>Projects by Department</CardTitle>
      <CardBox>
        <FigureList $num={37} $gap={14} $top={6}>
          {departments.map(([name, count]) => (
            <React.Fragment key={name}>
              <dt>{count}</dt>
              <dd>{name}</dd>
            </React.Fragment>
          ))}
        </FigureList>
      </CardBox>
    </div>
    <div>
      <CardTitle>Performance by Department</CardTitle>
      <CardBox>
        <FigureList $num={45} $gap={5} $top={6}>
          {departments.map(([name, , pct]) => (
            <React.Fragment key={name}>
              <dt>{pct}</dt>
              <dd>{name}</dd>
            </React.Fragment>
          ))}
        </FigureList>
      </CardBox>
    </div>
    <div>
      <CardTitle>Next 6 Months</CardTitle>
      <CardBox>
        <FigureList $num={33} $gap={8} $top={26}>
          {nextMonths.map((name) => (
            <React.Fragment key={name}>
              <dt>0</dt>
              <dd>{name}</dd>
            </React.Fragment>
          ))}
        </FigureList>
      </CardBox>
    </div>
    <div>
      <CardTitle>Choices</CardTitle>
      <CardBox>
        <ChoiceLabel>
          Graph by
          <FormSelect>
            <select>
              <option>Week</option>
            </select>
            <DropArrow>
              <Triangle size={8} color="#000" />
            </DropArrow>
          </FormSelect>
        </ChoiceLabel>
        <ChoiceLabel>
          Detailed
          <FormSelect>
            <select>
              <option>Summarized</option>
            </select>
            <DropArrow>
              <Triangle size={8} color="#000" />
            </DropArrow>
          </FormSelect>
        </ChoiceLabel>
      </CardBox>
    </div>
  </Cards>
);

const Projects = () => {
  const [selected, setSelected] = useState(1);

  return (
    <ProjectList>
      {projects.map((project, index) => (
        <ProjectCard key={project.name}>
          <ProjectInfo>
            <ProjectHead>
              <Diamond />
              <span>
                <strong>{project.name}</strong>
                {project.area}
              </span>
            </ProjectHead>
            <Stats>
              {project.stats.map((value, i) => {
                const StatIcon = statIcons[i];
                return (
                  <Stat key={i}>
                    <StatIcon />
                    {value}
                  </Stat>
                );
              })}
            </Stats>
          </ProjectInfo>
          <ProjectResult>
            <Radio name="project" checked={selected === index} onChange={() => setSelected(index)} />
            <strong>{project.done}</strong>
            concluded
          </ProjectResult>
        </ProjectCard>
      ))}
      <ProjectCard />
    </ProjectList>
  );
};

const TimeManagement = () => (
  <Schedule>
    <ScheduleHead>
      <h2>Project Time Management</h2>
      <span>Showing Actions 1 a 1 (total of 1)</span>
    </ScheduleHead>
    <Gantt>
      <colgroup>
        <col width="248" />
        <col width="48" />
        <col width="36" />
        <col width="25" />
        {weeks.map((week, i) => (
          <col key={i} />
        ))}
      </colgroup>
      <thead>
        <tr>
          <Period colSpan={4}>06/01/lunes - 08/10/lunes (2 months)</Period>
          {weeks.map((week, i) => (
            <MonthCell key={i}>{months[i]}</MonthCell>
          ))}
        </tr>
        <tr>
          <HeadCell $first>Activities</HeadCell>
          <HeadCell>%</HeadCell>
          <HeadCell>Deadline</HeadCell>
          <HeadCell />
          {weeks.map((week, i) => (
            <WeekCell key={i}>{week}</WeekCell>
          ))}
        </tr>
      </thead>
      <tbody>
        {activities.map((item, row) => (
          <ActivityRow key={row}>
            <Cell $first>{item.name}</Cell>
            <Cell>{item.pct}</Cell>
            <Cell>{item.date}</Cell>
            <Cell>{item.name && <RowTick />}</Cell>
            {weeks.map((week, i) => (
              <WeekSlot key={i} $filled={i >= item.from && i <= item.to} />
            ))}
          </ActivityRow>
        ))}
      </tbody>
    </Gantt>
  </Schedule>
);

const SpinButtons = ({ margin, height }) => (
  <Spinner $margin={margin} $height={height}>
    <button aria-label="Subir">
      <Triangle dir="up" size={10} color="#000" />
    </button>
    <button aria-label="Bajar">
      <Triangle size={10} color="#000" />
    </button>
  </Spinner>
);

const App = () => (
  <Window>
    <GlobalStyle />
    <Header />
    <TabRow>
      <TabList>
        {ribbonTabs.map((tab) => (
          <RibbonTab key={tab} $active={tab === 'Inicio'}>
            {tab}
          </RibbonTab>
        ))}
      </TabList>
      <TabActions>
        <ShareButton>
          <Svg w={10} stroke="#1f6b41">
            <path d="M3 3.500H.5v6h8V7M3 7c0-3 2-4 4-4V1l2.500 2.800L7 6.500v-2C5 4.500 4 5.500 3 7z" />
          </Svg>
          Compartir
        </ShareButton>
        <ShareButton>
          <Svg w={10} h={9} stroke="#1f6b41">
            <path d="M.5.5h9v5.500H4.500L2.500 8V6h-2z" />
          </Svg>
          Comentarios
        </ShareButton>
      </TabActions>
    </TabRow>
    <RibbonBar />
    <FormulaBar>
      <NameBox>
        <input defaultValue="X25" aria-label="Cuadro de nombres" />
        <Triangle size={6} />
      </NameBox>
      <Dots $margin="6px 11px 0 10px" />
      <FormulaButtons>
        <button aria-label="Cancelar">
          <Svg w={9} stroke="#b5b5b5" strokeWidth="1.300">
            <path d="M1 1l7 7M8 1L1 8" />
          </Svg>
        </button>
        <button aria-label="Introducir">
          <Svg w={10} h={9} stroke="#b5b5b5" strokeWidth="1.600">
            <path d="M1 4.500L4 7.500 9 1.500" />
          </Svg>
        </button>
        <button aria-label="Insertar función">
          <Svg w={11} h={12} strokeWidth="1.200">
            <path d="M7 1C5 .5 4.500 1.500 4 4L2.800 9C2.500 10.500 2 11 .5 11M2 4.500h4M6 6c1.500-.5 1.500 4.500 3.500 4M10 6C8.500 6 7.500 10 5.500 10" />
          </Svg>
        </button>
      </FormulaButtons>
      <FormulaInput>
        <input aria-label="Barra de fórmulas" />
        <Svg w={6} h={4}>
          <path d="M.8 3.300L3 1l2.200 2.300" />
        </Svg>
      </FormulaInput>
    </FormulaBar>
    <SheetArea>
      <Sheet>
        <NavBar>
          {navItems.map((item) => (
            <NavItem key={item.text} href="#" $width={item.width} $left={item.left} $gap={item.gap} $active={item.active}>
              {navIcons[item.icon]}
              {item.text}
            </NavItem>
          ))}
        </NavBar>
        <BlueBand />
        <Panel>
          <PanelTitle>PROJECT MONITORING PANEL</PanelTitle>
          <SummaryCards />
          <Lower>
            <SpinButtons margin="0 4px 0 1px" height={173} />
            <Projects />
            <TimeManagement />
            <SpinButtons margin="27px 0 0 5px" height={129} />
          </Lower>
        </Panel>
      </Sheet>
      <VerticalScroll>
        <ScrollButton aria-label="Desplazar arriba">
          <Triangle dir="up" />
        </ScrollButton>
        <ScrollTrack>
          <ScrollThumb $part={70} />
        </ScrollTrack>
        <ScrollButton aria-label="Desplazar abajo">
          <Triangle />
        </ScrollButton>
      </VerticalScroll>
    </SheetArea>
    <SheetTabs>
      <TabArrows>
        <Triangle dir="left" color="#bbb" />
        <Triangle dir="right" color="#bbb" />
      </TabArrows>
      <SheetTab $active>Dashboard</SheetTab>
      <SheetTab>Projects</SheetTab>
      <SheetTab>Plans</SheetTab>
      <SheetTab>Summary</SheetTab>
      <SheetTab $color="#44546a" $text="#fff">Setting</SheetTab>
      <SheetTab $color="#ffc000" $text="#4a3300">Recommendation</SheetTab>
      <AddSheet aria-label="Hoja nueva">
        <Svg w={13} stroke="#777">
          <circle cx="6.500" cy="6.500" r="6" />
          <path d="M6.500 3.500v6M3.500 6.500h6" strokeWidth="1.500" />
        </Svg>
      </AddSheet>
      <Dots $margin="auto 12px auto auto" />
      <HorizontalScroll>
        <ScrollButton aria-label="Desplazar a la izquierda">
          <Triangle dir="left" />
        </ScrollButton>
        <ScrollTrack $horizontal>
          <ScrollThumb $part={96} />
        </ScrollTrack>
        <ScrollButton aria-label="Desplazar a la derecha">
          <Triangle dir="right" />
        </ScrollButton>
      </HorizontalScroll>
    </SheetTabs>
    <StatusBar>
      <ViewButton $active aria-label="Normal">
        <Svg w={11}>
          <path d="M.5.5h10v10H.5zM.5 4h10M.5 7h10M4 .5v10M7 .5v10" />
        </Svg>
      </ViewButton>
      <ViewButton aria-label="Diseño de página">
        <Svg w={11}>
          <path d="M.5.5h10v10H.5zM3 2.500h5v6H3zM4 4.500h3M4 6.500h3" />
        </Svg>
      </ViewButton>
      <ViewButton aria-label="Vista previa de salto de página">
        <Svg w={11}>
          <path d="M.5.5h10v10H.5zM4 .5v6h3.500v-6M.5 6.500H4" />
        </Svg>
      </ViewButton>
      <ZoomStep>−</ZoomStep>
      <ZoomSlider aria-label="Zoom" defaultValue={50} />
      <ZoomStep>+</ZoomStep>
      <ZoomValue>100%</ZoomValue>
    </StatusBar>
  </Window>
);

export default App;
